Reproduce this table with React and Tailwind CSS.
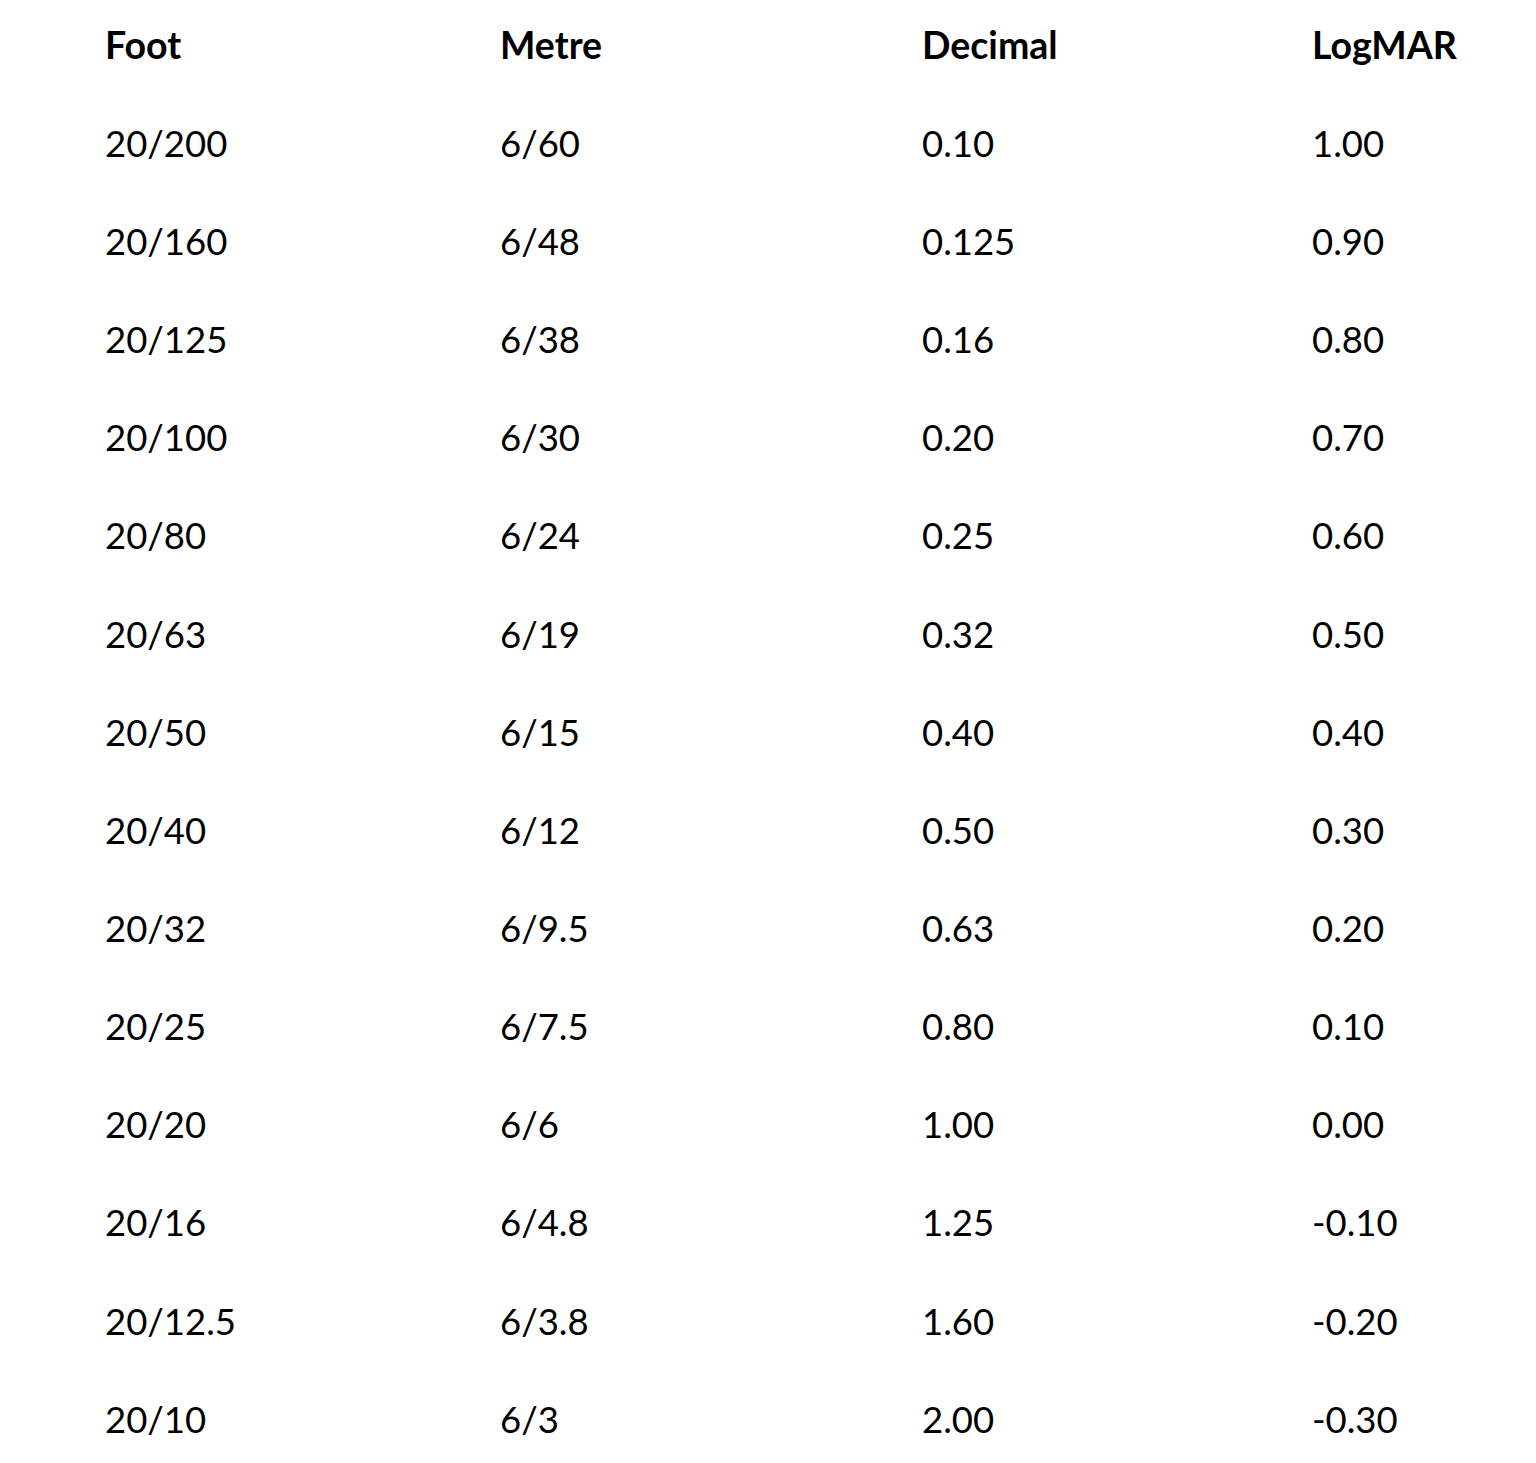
import React from "react";

const rows = [
  ["20/200", "6/60", "0.10", "1.00"],
  ["20/160", "6/48", "0.125", "0.90"],
  ["20/125", "6/38", "0.16", "0.80"],
  ["20/100", "6/30", "0.20", "0.70"],
  ["20/80", "6/24", "0.25", "0.60"],
  ["20/63", "6/19", "0.32", "0.50"],
  ["20/50", "6/15", "0.40", "0.40"],
  ["20/40", "6/12", "0.50", "0.30"],
  ["20/32", "6/9.5", "0.63", "0.20"],
  ["20/25", "6/7.5", "0.80", "0.10"],
  ["20/20", "6/6", "1.00", "0.00"],
  ["20/16", "6/4.8", "1.25", "-0.10"],
  ["20/12.5", "6/3.8", "1.60", "-0.20"],
  ["20/10", "6/3", "2.00", "-0.30"],
];

function Row({ cells, header }) {
  return (
    <div
      className={
        "grid grid-cols-[395px_422px_390px_1fr] items-center " +
        (header ? "h-[94px] pb-[4px] font-bold text-[37.5px]" : "h-[98.15px] text-[36.5px]")
      }
    >
      {cells.map((c, i) => (
        <div key={i} className="leading-none whitespace-nowrap">
          {c}
        </div>
      ))}
    </div>
  );
}

export default function App() {
  return (
    <div
      className="w-[1536px] h-[1463px] bg-white text-black pl-[105px] overflow-hidden"
      style={{ fontFamily: "Lato, 'Open Sans', sans-serif" }}
    >
      <Row header cells={["Foot", "Metre", "Decimal", "LogMAR"]} />
      {rows.map((r, i) => (
        <Row key={i} cells={r} />
      ))}
    </div>
  );
}
